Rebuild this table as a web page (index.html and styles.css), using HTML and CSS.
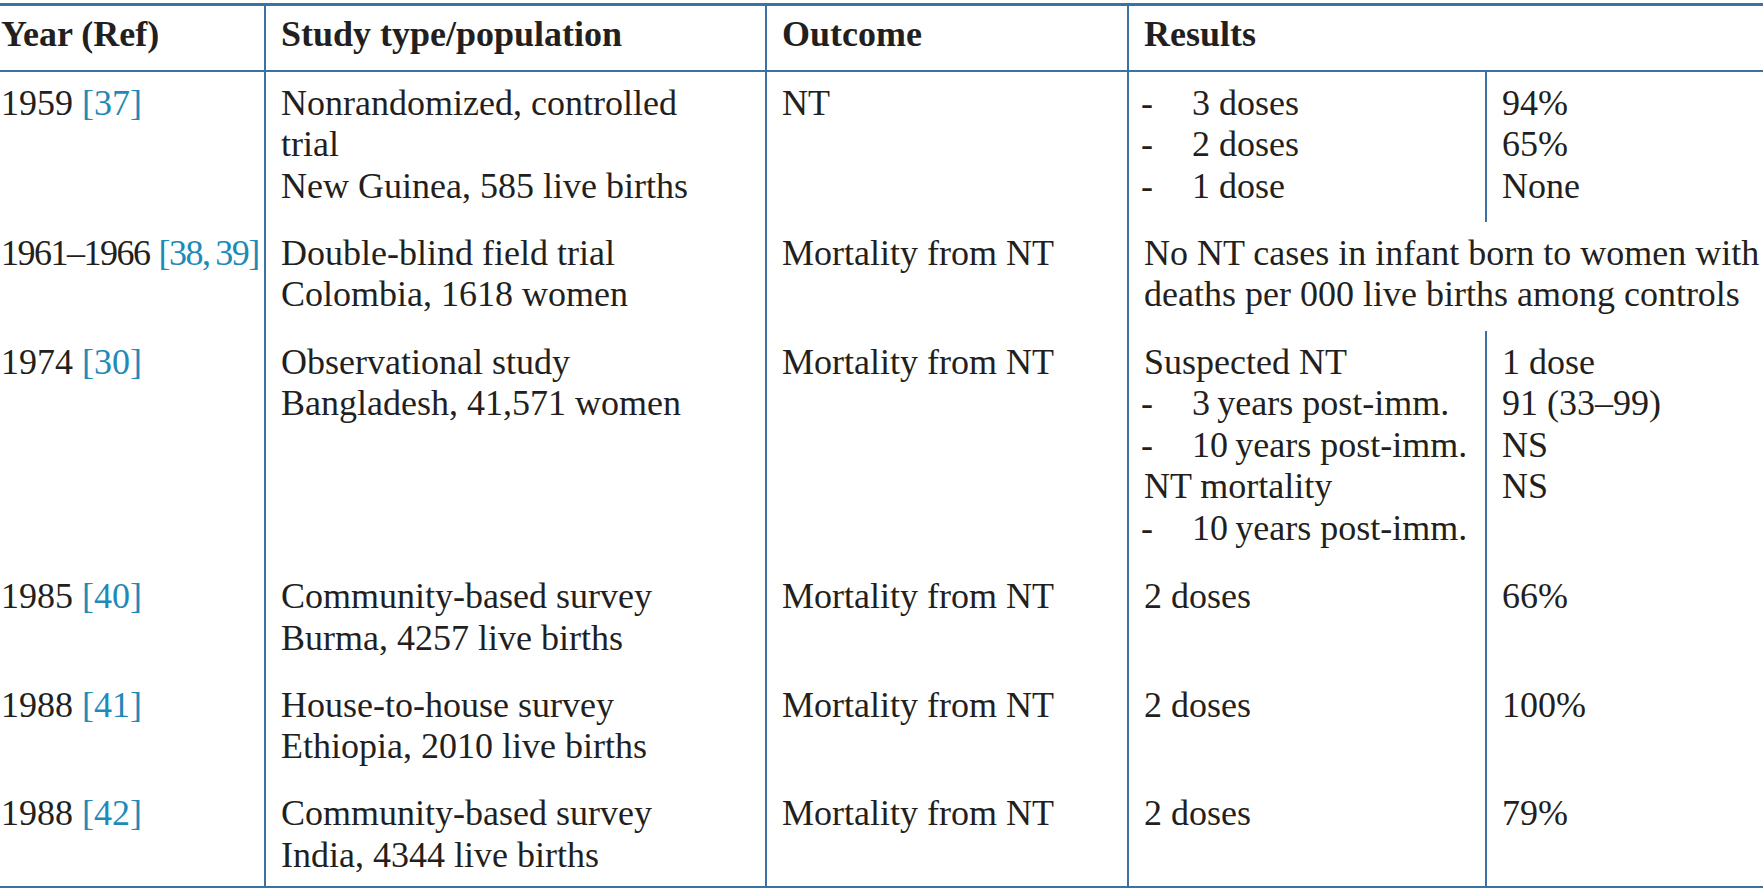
FILE: index.html
```html
<!DOCTYPE html>
<html lang="en">
<head>
    <meta charset="UTF-8">
    <meta name="viewport" content="width=device-width, initial-scale=1.0">
    <title>Tetanus toxoid vaccine studies</title>
    <link rel="stylesheet" href="styles.css">
</head>
<body>
    <table class="trials">
        <colgroup>
            <col class="c-year">
            <col class="c-study">
            <col class="c-outcome">
            <col class="c-result">
            <col class="c-value">
        </colgroup>
        <thead>
            <tr>
                <th>Year (Ref)</th>
                <th>Study type/population</th>
                <th>Outcome</th>
                <th colspan="2">Results</th>
            </tr>
        </thead>
        <tbody>
            <tr>
                <td>1959 <a class="ref">[37]</a></td>
                <td>Nonrandomized, controlled<br>trial<br>New Guinea, 585 live births</td>
                <td>NT</td>
                <td>
                    <div class="item"><span class="dash">-</span>3 doses</div>
                    <div class="item"><span class="dash">-</span>2 doses</div>
                    <div class="item"><span class="dash">-</span>1 dose</div>
                </td>
                <td>94%<br>65%<br>None</td>
            </tr>
            <tr>
                <td><span class="tight">1961–1966</span> <a class="ref tight">[38,&thinsp;39]</a></td>
                <td>Double-blind field trial<br>Colombia, 1618 women</td>
                <td>Mortality from NT</td>
                <td colspan="2">No NT cases in infant born to women with<br>deaths per 000 live births among controls</td>
            </tr>
            <tr class="tall">
                <td>1974 <a class="ref">[30]</a></td>
                <td>Observational study<br>Bangladesh, 41,571 women</td>
                <td>Mortality from NT</td>
                <td>
                    <div>Suspected NT</div>
                    <div class="item"><span class="dash">-</span>3&thinsp;years post-imm.</div>
                    <div class="item"><span class="dash">-</span>10&thinsp;years post-imm.</div>
                    <div>NT mortality</div>
                    <div class="item"><span class="dash">-</span>10&thinsp;years post-imm.</div>
                </td>
                <td>1 dose<br>91 (33–99)<br>NS<br>NS</td>
            </tr>
            <tr>
                <td>1985 <a class="ref">[40]</a></td>
                <td>Community-based survey<br>Burma, 4257 live births</td>
                <td>Mortality from NT</td>
                <td>2 doses</td>
                <td>66%</td>
            </tr>
            <tr>
                <td>1988 <a class="ref">[41]</a></td>
                <td>House-to-house survey<br>Ethiopia, 2010 live births</td>
                <td>Mortality from NT</td>
                <td>2 doses</td>
                <td>100%</td>
            </tr>
            <tr class="last">
                <td>1988 <a class="ref">[42]</a></td>
                <td>Community-based survey<br>India, 4344 live births</td>
                <td>Mortality from NT</td>
                <td>2 doses</td>
                <td>79%</td>
            </tr>
        </tbody>
    </table>
</body>
</html>
```

FILE: styles.css
```css
body {
    margin: 0;
    overflow: hidden;
    background-color: #ffffff;
    font-family: "Liberation Serif", "Times New Roman", serif;
    color: #231f20;
}
.trials {
    margin: 3px 0 0 -15px;
    width: 1920px;
    table-layout: fixed;
    border-collapse: separate;
    border-spacing: 0;
    border-top: 3px solid #3b72a6;
    border-bottom: 2px solid #3b72a6;
    font-size: 36px;
    line-height: 41.6px;
}
.c-year {
    width: 279px;
}
.c-study {
    width: 501px;
}
.c-outcome {
    width: 362px;
}
.c-result {
    width: 358px;
}
.c-value {
    width: 420px;
}
th,
td {
    text-align: left;
    vertical-align: top;
    white-space: nowrap;
    padding: 11px 15px 14.5px;
    border-left: 2px solid #3b72a6;
}
th:first-child,
td:first-child {
    border-left: none;
    padding-left: 16px;
}
th {
    font-weight: bold;
    padding-top: 8px;
    padding-bottom: 14px;
    border-bottom: 2px solid #3b72a6;
}
.tall td {
    padding-bottom: 15.5px;
}
.last td {
    padding-bottom: 9.5px;
}
.tight {
    letter-spacing: -1.5px;
}
.ref {
    color: #1e8ab8;
}
.item {
    display: flex;
}
.dash {
    flex: none;
    width: 48px;
    margin-left: -3px;
    padding-right: 3px;
}
```
